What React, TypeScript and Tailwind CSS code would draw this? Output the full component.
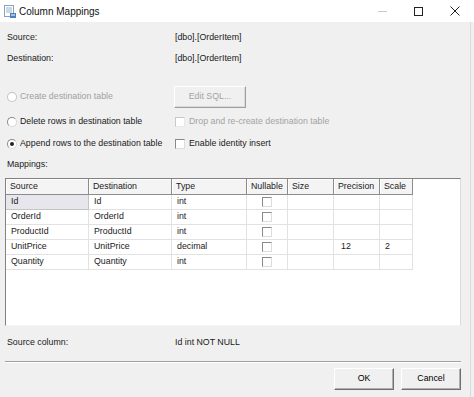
import React from "react";

const columns = [
  { name: "Source", w: "w-[83px]" },
  { name: "Destination", w: "w-[83px]" },
  { name: "Type", w: "w-[75px]" },
  { name: "Nullable", w: "w-[41px]" },
  { name: "Size", w: "w-[46px]" },
  { name: "Precision", w: "w-[46px]" },
  { name: "Scale", w: "w-[33px]" },
];

const rows = [
  ["Id", "Id", "int", "", "", ""],
  ["OrderId", "OrderId", "int", "", "", ""],
  ["ProductId", "ProductId", "int", "", "", ""],
  ["UnitPrice", "UnitPrice", "decimal", "", "12", "2"],
  ["Quantity", "Quantity", "int", "", "", ""],
];

function Radio({ checked, disabled }: { checked?: boolean; disabled?: boolean }) {
  return (
    <span
      className={`flex size-[10px] flex-none items-center justify-center rounded-full border bg-white ${
        disabled ? "border-[#c4c4c4] border-t-[#bdbdbd]" : "border-[#8a8a8a] border-b-[#d8d8d8] border-r-[#d8d8d8]"
      }`}
    >
      {checked && <span className="size-[4px] rounded-full bg-[#222]" />}
    </span>
  );
}

function Check({ disabled }: { disabled?: boolean }) {
  return (
    <span
      className={`block size-[10px] flex-none border bg-white ${
        disabled
          ? "border-[#c8c8c8] border-b-[#e8e8e8] border-r-[#e8e8e8] bg-[#f4f4f4]"
          : "border-[#8a8a8a] border-b-[#dcdcdc] border-r-[#dcdcdc]"
      }`}
    />
  );
}

function Button({ children, disabled, className = "" }: { children: React.ReactNode; disabled?: boolean; className?: string }) {
  return (
    <button
      type="button"
      className={`h-[22px] border border-l-white border-t-white border-b-[#6f6f6f] border-r-[#6f6f6f] bg-[#f0f0f0] shadow-[inset_-1px_-1px_0_#b0b0b0] ${
        disabled ? "text-[#a3a3a3] border-b-[#9f9f9f] border-r-[#9f9f9f] shadow-[inset_-1px_-1px_0_#dadada]" : "text-black"
      } ${className}`}
    >
      {children}
    </button>
  );
}

export default function App() {
  return (
    <div
      className="relative h-[397px] w-[474px] overflow-hidden bg-[#f0f0f0] text-[8.8px] text-[#1a1a1a]"
      style={{ fontFamily: '"Liberation Sans", Arial, sans-serif' }}
    >
      {/* title bar */}
      <div className="flex h-[22px] items-center bg-white pl-[3px]">
        <svg width="14" height="15" viewBox="0 0 14 15" className="flex-none">
          <rect x="1.5" y="1.5" width="9" height="11" fill="#fff" stroke="#8aa2c0" />
          <path d="M3 4h6M3 6h6M3 8h6" stroke="#9ab0cc" strokeWidth="1" />
          <rect x="7" y="9" width="6" height="5" fill="#4b7fc2" />
          <path d="M8 11h4" stroke="#fff" strokeWidth="1" />
        </svg>
        <span className="ml-[2px] text-[10px] text-[#111]">Column Mappings</span>
        <div className="ml-auto flex h-full items-center">
          <span className="flex w-[36px] justify-center">
            <span className="block h-px w-[9px] bg-[#c8c8c8]" />
          </span>
          <span className="flex w-[36px] justify-center">
            <span className="block size-[9px] border border-[#222]" />
          </span>
          <span className="flex w-[38px] justify-center">
            <svg width="10" height="10" viewBox="0 0 10 10">
              <path d="M0.5 0.5l9 9M9.5 0.5l-9 9" stroke="#222" strokeWidth="1" />
            </svg>
          </span>
        </div>
      </div>

      <div className="flex flex-col px-[5px]">
        <div className="mt-[5px] flex h-[21px] items-center">
          <span className="w-[170px] pl-[2px]">Source:</span>
          <span>[dbo].[OrderItem]</span>
        </div>
        <div className="flex h-[21px] items-center">
          <span className="w-[170px] pl-[2px]">Destination:</span>
          <span>[dbo].[OrderItem]</span>
        </div>

        <div className="mt-[17px] flex h-[22px] items-center">
          <div className="flex w-[169px] items-center gap-[3px] pl-[2px] text-[#a0a0a0]">
            <Radio disabled />
            <span>Create destination table</span>
          </div>
          <Button disabled className="w-[72px] h-[20px]">
            Edit SQL...
          </Button>
        </div>
        <div className="mt-[3px] flex h-[22px] items-center">
          <div className="flex w-[170px] items-center gap-[3px] pl-[2px]">
            <Radio />
            <span>Delete rows in destination table</span>
          </div>
          <div className="flex items-center gap-[4px] text-[#a3a3a3]">
            <Check disabled />
            <span>Drop and re-create destination table</span>
          </div>
        </div>
        <div className="flex h-[21px] items-center">
          <div className="flex w-[170px] items-center gap-[3px] pl-[2px]">
            <Radio checked />
            <span>Append rows to the destination table</span>
          </div>
          <div className="flex items-center gap-[4px]">
            <Check />
            <span>Enable identity insert</span>
          </div>
        </div>

        <div className="mt-[3px] flex h-[16px] items-center pl-[2px]">Mappings:</div>

        {/* grid */}
        <div className="mt-[5px] h-[148px] w-[456px] border border-[#828282] border-b-[#f4f4f4] border-r-[#dcdcdc] bg-white">
          <div className="flex h-[16px]">
            {columns.map((c) => (
              <div
                key={c.name}
                className={`${c.w} flex items-center border-b border-r border-b-[#8c8c8c] border-r-[#8c8c8c] bg-[#f4f4f4] pl-[4px] shadow-[inset_1px_1px_0_#fff]`}
              >
                {c.name}
              </div>
            ))}
          </div>
          {rows.map((r, i) => (
            <div key={i} className="flex h-[15px]">
              {columns.map((c, j) => {
                const sel = i === 0 && j === 0;
                return (
                  <div
                    key={c.name}
                    className={`${c.w} flex items-center border-b border-r border-[#e2e2e2] ${
                      j === 3 ? "justify-center" : "pl-[5px]"
                    } ${sel ? "bg-[#e6e6ec] border-b-[#c4c4c4] border-r-[#c4c4c4]" : ""}`}
                  >
                    {j < 3 ? r[j] : j === 3 ? <Check /> : j === 5 ? <span className="pl-[2px]">{r[4]}</span> : j === 6 ? r[5] : ""}
                  </div>
                );
              })}
            </div>
          ))}
        </div>

        <div className="mt-[8px] flex h-[18px] items-center">
          <span className="w-[170px] pl-[2px]">Source column:</span>
          <span>Id int NOT NULL</span>
        </div>

        <div className="mt-[9px] h-[2px] w-[456px] border-t border-b border-t-[#a0a0a0] border-b-white" />

        <div className="mt-[5px] flex w-[456px] justify-end gap-[7px]">
          <Button className="w-[60px]">OK</Button>
          <Button className="w-[60px]">Cancel</Button>
        </div>
      </div>

      <div className="absolute right-[3px] top-[22px] h-[375px] w-px bg-[#dadada]" />
    </div>
  );
}
